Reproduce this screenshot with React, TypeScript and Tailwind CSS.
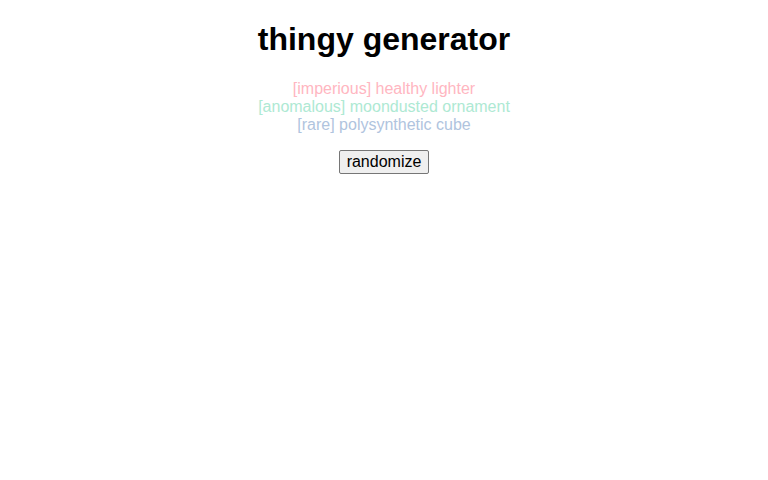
const thingies = [
  { rarity: 'imperious', name: 'healthy lighter', color: 'text-[#ffb6c1]' },
  { rarity: 'anomalous', name: 'moondusted ornament', color: 'text-[#aee9d3]' },
  { rarity: 'rare', name: 'polysynthetic cube', color: 'text-[#b0c4de]' },
]

export default function App() {
  return (
    <div className="min-h-screen bg-white text-center text-black font-['Liberation_Sans',Arial,sans-serif] text-base">
      <h1 className="pt-[21px] mb-[22px] text-[32px] leading-[37px] font-bold">thingy generator</h1>
      <div className="leading-[18px]">
        {thingies.map(t => (
          <div key={t.name} className={t.color}>[{t.rarity}] {t.name}</div>
        ))}
      </div>
      <button className="mt-[16px] px-[7px] py-[1px] border border-[#767676] rounded-[2px] bg-[#efefef] text-base leading-[20px] text-black">
        randomize
      </button>
    </div>
  )
}
